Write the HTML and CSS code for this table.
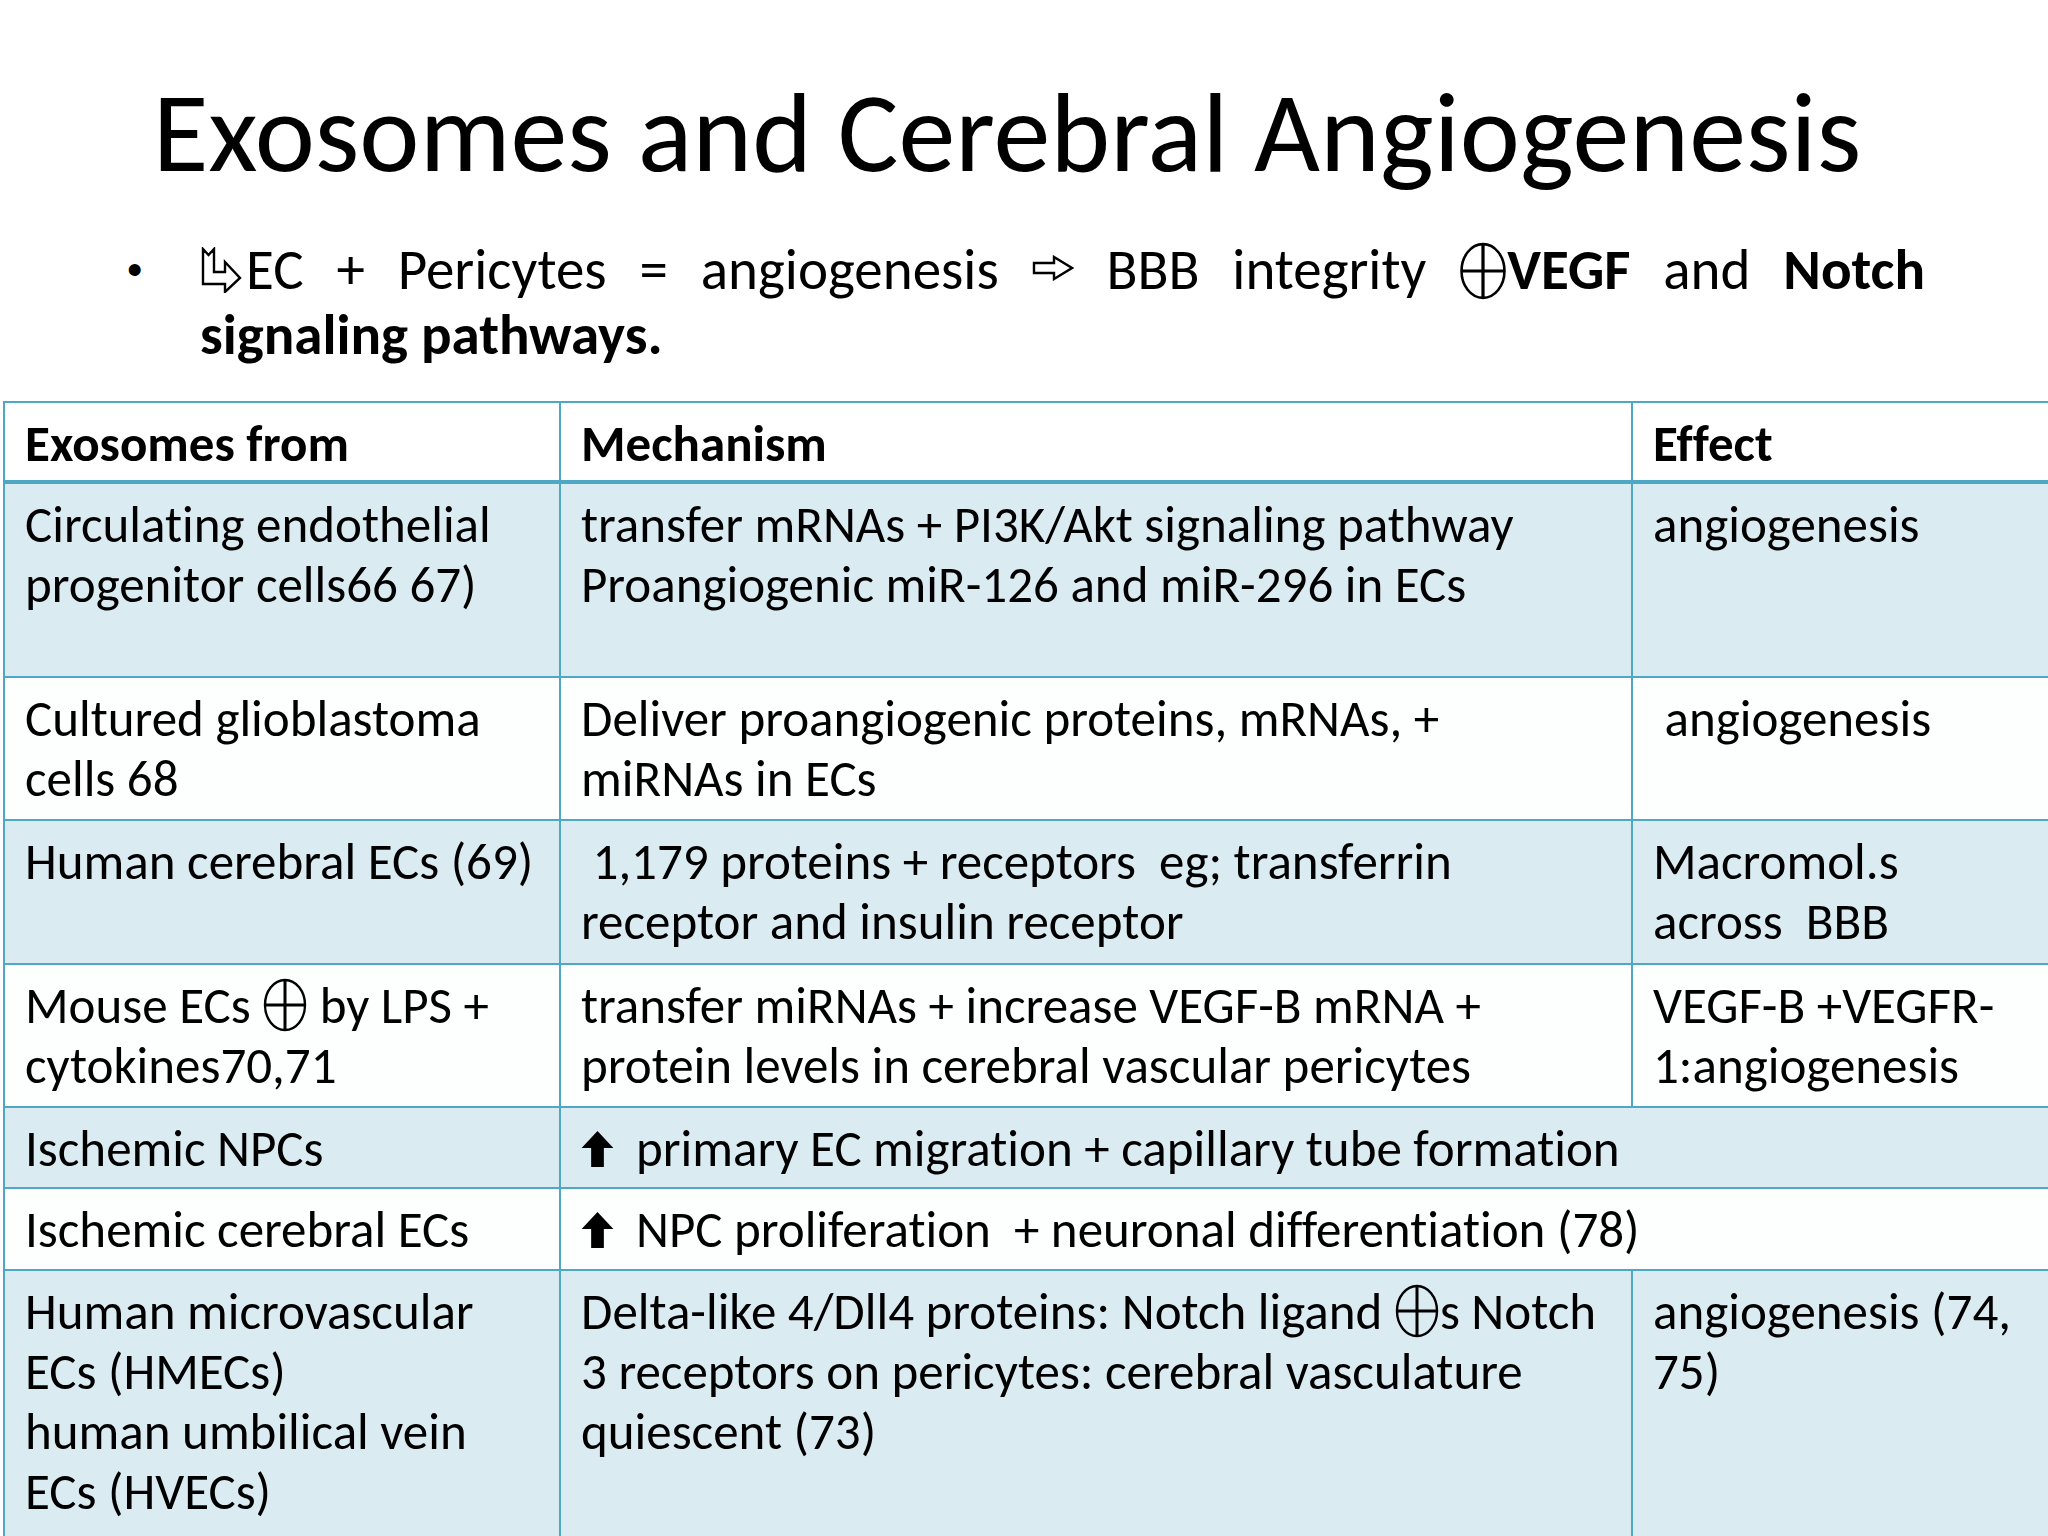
FILE: index.html
```html
<!DOCTYPE html>
<html lang="en">
<head>
<meta charset="utf-8">
<title>Exosomes and Cerebral Angiogenesis</title>
<link rel="stylesheet" href="styles.css">
</head>
<body>
<div class="slide">
  <h1 class="title">Exosomes and Cerebral Angiogenesis</h1>

  <div class="bullet">
    <span class="dot">•</span>
    <p class="btext">
      <span class="line1"><svg class="ic-bent" viewBox="0 0 42 46" aria-hidden="true"><path d="M3 2 L8.5 8 L14 2 L14 25 L25 25 L25 15 L40 31 L25 45 L25 37 L3 37 Z" fill="#fff" stroke="#000" stroke-width="2.4" stroke-linejoin="miter"/></svg>EC + Pericytes = angiogenesis <svg class="ic-right" viewBox="0 0 42 26" aria-hidden="true"><path d="M2 8 L22 8 L22 2 L40 13 L22 24 L22 18 L2 18 Z" fill="#fff" stroke="#000" stroke-width="2.4"/></svg> BBB integrity <svg class="ic-plus" viewBox="0 0 44 54" aria-hidden="true"><ellipse cx="22" cy="27" rx="20" ry="25" fill="none" stroke="#000" stroke-width="2.4"/><path d="M22 2 V52 M2 27 H42" stroke="#000" stroke-width="3"/></svg><b>VEGF</b> and <b>Notch</b></span>
      <span class="line2"><b>signaling pathways.</b></span>
    </p>
  </div>

  <div class="table-wrap">
    <table class="grid">
      <colgroup>
        <col class="c1"><col class="c2"><col class="c3">
      </colgroup>
      <thead>
        <tr class="hdr">
          <th>Exosomes from</th>
          <th>Mechanism</th>
          <th>Effect</th>
        </tr>
      </thead>
      <tbody>
        <tr class="r1 band">
          <td>Circulating endothelial<br>progenitor cells66 67)</td>
          <td>transfer mRNAs + PI3K/Akt signaling pathway<br>Proangiogenic miR-126 and miR-296 in ECs</td>
          <td>angiogenesis</td>
        </tr>
        <tr class="r2 plain">
          <td>Cultured glioblastoma<br>cells 68</td>
          <td>Deliver proangiogenic proteins, mRNAs, +<br>miRNAs in ECs</td>
          <td>&nbsp;angiogenesis</td>
        </tr>
        <tr class="r3 band">
          <td>Human cerebral ECs (69)</td>
          <td>&nbsp;1,179 proteins + receptors &nbsp;eg; transferrin<br>receptor and insulin receptor</td>
          <td>Macromol.s<br>across &nbsp;BBB</td>
        </tr>
        <tr class="r4 plain">
          <td>Mouse ECs <svg class="ic-plus sm" viewBox="0 0 44 54" aria-hidden="true"><ellipse cx="22" cy="27" rx="20" ry="25" fill="none" stroke="#000" stroke-width="2.4"/><path d="M22 2 V52 M2 27 H42" stroke="#000" stroke-width="3"/></svg> by LPS +<br>cytokines70,71</td>
          <td>transfer miRNAs + increase VEGF-B mRNA +<br>protein levels in cerebral vascular pericytes</td>
          <td>VEGF-B +VEGFR-<br>1:angiogenesis</td>
        </tr>
        <tr class="r5 band">
          <td>Ischemic NPCs</td>
          <td colspan="2"><svg class="ic-up" viewBox="0 0 30 34" aria-hidden="true"><path d="M15 0 L30 16 L21 16 L21 34 L9 34 L9 16 L0 16 Z" fill="#000"/></svg>primary EC migration + capillary tube formation</td>
        </tr>
        <tr class="r6 plain">
          <td>Ischemic cerebral ECs</td>
          <td colspan="2"><svg class="ic-up" viewBox="0 0 30 34" aria-hidden="true"><path d="M15 0 L30 16 L21 16 L21 34 L9 34 L9 16 L0 16 Z" fill="#000"/></svg>NPC proliferation &nbsp;+ neuronal differentiation (78)</td>
        </tr>
        <tr class="r7 band">
          <td>Human microvascular<br>ECs (HMECs)<br>human umbilical vein<br>ECs (HVECs)</td>
          <td>Delta-like 4/Dll4 proteins: Notch ligand <svg class="ic-plus sm" viewBox="0 0 44 54" aria-hidden="true"><ellipse cx="22" cy="27" rx="20" ry="25" fill="none" stroke="#000" stroke-width="2.4"/><path d="M22 2 V52 M2 27 H42" stroke="#000" stroke-width="3"/></svg>s Notch<br>3 receptors on pericytes: cerebral vasculature<br>quiescent (73)</td>
          <td>angiogenesis (74,<br>75)</td>
        </tr>
      </tbody>
    </table>
  </div>
</div>
</body>
</html>
```

FILE: styles.css
```css
html, body {
  margin: 0;
  padding: 0;
  background: #ffffff;
}

.slide {
  width: 2048px;
  height: 1536px;
  overflow: hidden;
  background: #ffffff;
  color: #000000;
  font-family: Carlito, "Calibri", Lato, "Open Sans", sans-serif;
  font-variant-ligatures: none;
}

.title {
  margin: 0;
  box-sizing: border-box;
  height: 200px;
  padding: 62px 34px 0 0;
  font-size: 114px;
  font-weight: normal;
  line-height: 140px;
  text-align: center;
  white-space: nowrap;
}

.bullet {
  display: flex;
  margin: 37px 0 0 0;
  padding: 0 123px 0 127px;
  font-size: 57px;
  line-height: 65px;
}

.dot {
  flex: none;
  width: 73px;
  font-family: "Liberation Sans", Arial, sans-serif;
  font-size: 44px;
}

.btext {
  flex: 1;
  margin: 0;
  text-align: justify;
}

.line1 {
  display: block;
  text-align-last: justify;
  white-space: nowrap;
}

.line2 {
  display: block;
}

.ic-bent {
  width: 42px;
  height: 46px;
  vertical-align: -4px;
  margin-right: 4px;
}

.ic-right {
  width: 42px;
  height: 26px;
  vertical-align: 8px;
}

.ic-plus {
  width: 48px;
  height: 58px;
  vertical-align: -11px;
}

.ic-plus.sm {
  width: 46px;
  height: 54px;
  vertical-align: -9px;
}

.ic-up {
  width: 33px;
  height: 36px;
  vertical-align: -1px;
  margin-right: 22px;
}

.table-wrap {
  margin-top: 34px;
  padding-left: 3px;
}

.grid {
  table-layout: fixed;
  border-collapse: collapse;
  width: 2058px;
  font-size: 51px;
  line-height: 60px;
}

.c1 { width: 556px; }
.c2 { width: 1072px; }
.c3 { width: 430px; }

.grid th,
.grid td {
  border: 2px solid #4fa7c6;
  padding: 11px 20px 6px 20px;
  text-align: left;
  vertical-align: top;
  white-space: nowrap;
}

.grid th {
  font-weight: bold;
  border-bottom-width: 4px;
  padding-bottom: 6px;
  background: #ffffff;
}

.band td { background: #dbebf2; }
.plain td { background: #fdfefe; }

.hdr { height: 80px; }
.r1 { height: 195px; }
.r2 { height: 143px; }
.r3 { height: 144px; }
.r4 { height: 143px; }
.r5 { height: 81px; }
.r6 { height: 82px; }
.r7 { height: 300px; }
```
